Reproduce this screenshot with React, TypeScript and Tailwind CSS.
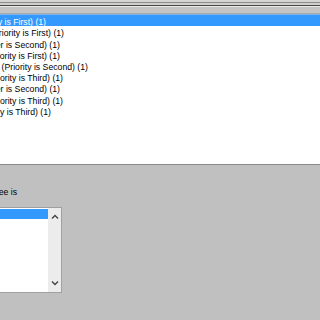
const rows = [
  { text: 'Quantity (Priority is First) (1)', end: 'w-[46px]', selected: true },
  { text: 'Unit Price (Priority is First) (1)', end: 'w-[64px]' },
  { text: 'Customer is Second) (1)', end: 'w-[60px]' },
  { text: 'Discount (Priority is First) (1)', end: 'w-[60px]' },
  { text: 'Freight (Priority is Second) (1)', end: 'w-[88px]' },
  { text: 'Ship Date (Priority is Third) (1)', end: 'w-[63px]' },
  { text: 'Order is Second) (1)', end: 'w-[60px]' },
  { text: 'Region (Priority is Third) (1)', end: 'w-[63px]' },
  { text: 'Country is Third) (1)', end: 'w-[51px]' },
]

function Chevron({ up }: { up?: boolean }) {
  return (
    <svg width="8" height="5" viewBox="0 0 8 5" className="block">
      <path
        d={up ? 'M1 4.5 L4 1.5 L7 4.5' : 'M1 0.5 L4 3.5 L7 0.5'}
        fill="none"
        stroke="#404040"
        strokeWidth="1.3"
      />
    </svg>
  )
}

export default function App() {
  return (
    <div
      className="w-[320px] h-[320px] overflow-hidden bg-[#c0c0c0] flex flex-col text-[8.7px] leading-none text-black"
      style={{ fontFamily: '"Liberation Sans", Arial, sans-serif' }}
    >
      {/* window chrome at the top */}
      <div className="flex flex-col">
        <div className="h-[2px] bg-[#d4d4d4]" />
        <div className="h-px bg-[#8c8c8c]" />
        <div className="h-[2px] bg-[#cfcfcf]" />
        <div className="h-px bg-[#4a4640]" />
        <div className="h-px bg-[#e8e8e8]" />
        <div className="h-[6px] bg-[#c4c4c4]" />
        <div className="h-px bg-[#a8a8a8]" />
        <div className="h-px bg-[#7fb4ec]" />
      </div>

      {/* list */}
      <div className="h-[149px] bg-white flex flex-col overflow-hidden">
        {rows.map((r) => (
          <div
            key={r.text}
            className={`h-[11.2px] shrink-0 flex items-center pt-[4px] ${r.selected ? 'bg-[#3399ff] text-white' : ''}`}
          >
            <div className={`${r.end} flex justify-end whitespace-nowrap`}>
              <span>{r.text}</span>
            </div>
          </div>
        ))}
      </div>
      <div className="h-px bg-[#8a8a8a]" />

      {/* lower panel */}
      <div className="flex flex-col pt-[23px]">
        <div className="w-[17px] flex justify-end whitespace-nowrap">
          <span>Employee is</span>
        </div>
        <div className="mt-[10px] w-[62px] h-[86px] flex border border-[#a0a0a0] border-l-0 bg-white">
          <div className="flex-1 flex flex-col pt-px">
            <div className="h-[10px] bg-[#3399ff]" />
          </div>
          <div className="w-[13px] bg-[#ececec] flex flex-col items-center justify-between py-[6px]">
            <Chevron up />
            <Chevron />
          </div>
        </div>
      </div>
    </div>
  )
}
